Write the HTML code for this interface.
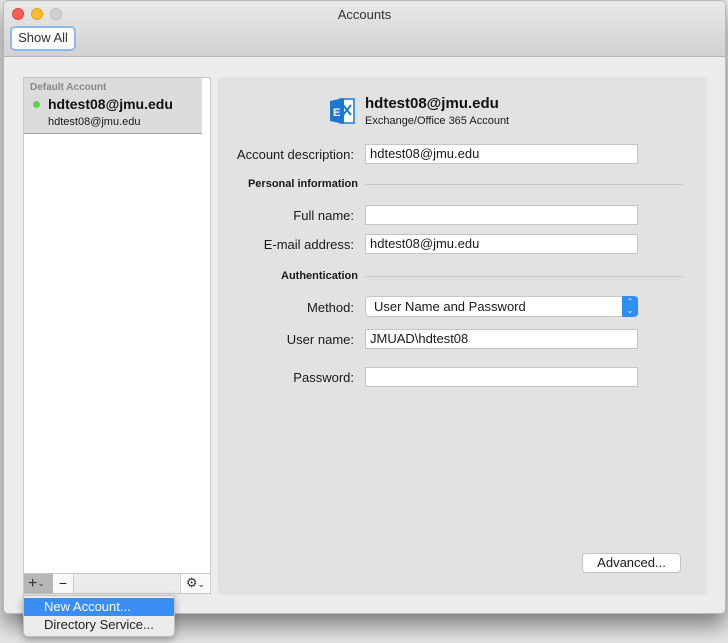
<!DOCTYPE html>
<html><head><meta charset="utf-8"><style>
*{box-sizing:border-box;margin:0;padding:0}
body{width:728px;height:643px;overflow:hidden;position:relative;font-family:"Liberation Sans",sans-serif;font-size:13px;color:#1a1a1a;background:#e6e6e6}
.win{position:absolute;left:3px;top:0;width:723px;height:614px;background:#ececec;border-radius:5px;overflow:hidden;border:1px solid #b8b8b8;box-shadow:0 12px 22px rgba(0,0,0,.45)}
.tb{position:absolute;left:0;top:0;right:0;height:56px;background:linear-gradient(#e9e9e9,#d2d2d2);border-bottom:1px solid #b4b4b4}
.dot{position:absolute;top:7px;width:12px;height:12px;border-radius:50%}
.title{position:absolute;top:6px;left:0;right:0;text-align:center;font-size:13px;color:#333}
.sa{position:absolute;left:6px;top:25px;width:66px;height:25px;border:2px solid #8fb8ec;border-radius:5px;background:#fbfbfb;font-size:13px;text-align:center;line-height:20px;color:#333}
.left{position:absolute;left:19px;top:76px;width:188px;height:517px;background:#fff;border:1px solid #c8c8c8}
.lhead{height:56px;background:#dcdcdc;border-bottom:1px solid #9e9e9e;position:relative;margin-right:8px}
.bar{position:absolute;left:0;bottom:0;width:186px;height:20px;background:#ececec;border-top:1px solid #c8c8c8}
.right{position:absolute;left:214px;top:76px;width:489px;height:518px;background:#e2e2e2;border-radius:4px}
.lbl{position:absolute;text-align:right;width:132px;left:4px;font-size:13px}
.inp{position:absolute;left:147px;width:273px;height:20px;background:#fff;border:1px solid #c5c5c5;font-size:13px;padding-left:4px;line-height:18px}
.sec{position:absolute;font-weight:bold;font-size:11px;text-align:right;width:134px;left:6px}
.hr{position:absolute;left:147px;width:318px;height:1px;background:#c8c8c8}
</style></head><body>
<div class="win">
 <div class="tb">
  <div class="dot" style="left:8px;background:#fc5f57;border:1px solid #e0443e"></div>
  <div class="dot" style="left:27px;background:#fdbc2e;border:1px solid #dfa023"></div>
  <div class="dot" style="left:46px;background:#cfcfcf;border:1px solid #bdbdbd"></div>
  <div class="title">Accounts</div>
  <div class="sa">Show All</div>
 </div>
 <div class="left">
  <div class="lhead">
   <div style="position:absolute;left:6px;top:4px;font-size:10px;font-weight:bold;color:#888">Default Account</div>
   <div style="position:absolute;left:9px;top:23px;width:7px;height:7px;border-radius:50%;background:#5ed14e"></div>
   <div style="position:absolute;left:24px;top:18px;font-size:14px;font-weight:bold;color:#111">hdtest08@jmu.edu</div>
   <div style="position:absolute;left:24px;top:38px;font-size:11px">hdtest08@jmu.edu</div>
  </div>
  <div class="bar">
   <div style="position:absolute;left:0;top:0;width:29px;height:19px;background:#b7b7b7;font-size:16px;line-height:18px;padding-left:4px;color:#333">+<span style="font-size:9px;vertical-align:2px">&#8964;</span></div>
   <div style="position:absolute;left:29px;top:0;width:21px;height:19px;background:#fafafa;border-right:1px solid #ccc;text-align:center;font-size:14px;line-height:18px">&minus;</div>
   <div style="position:absolute;right:0;top:0;width:30px;height:19px;background:#fafafa;border-left:1px solid #ccc;text-align:center;font-size:13px;line-height:18px;color:#333">&#9881;<span style="font-size:9px">&#8964;</span></div>
  </div>
 </div>
 <div class="right">
  <svg style="position:absolute;left:110px;top:19px" width="30" height="30" viewBox="0 0 30 30"><path d="M12 3h14v24H12z" fill="#fff" stroke="#1a78d0" stroke-width="1.5"/><path d="M15 9l8 10M23 9l-8 10" stroke="#1a78d0" stroke-width="2"/><path d="M2 5l14-3v26L2 25z" fill="#1a78d0"/><text x="5" y="20" font-size="11" font-weight="bold" fill="#fff" font-family="Liberation Sans">E</text></svg>
  <div style="position:absolute;left:147px;top:18px;font-size:15px;font-weight:bold;color:#111">hdtest08@jmu.edu</div>
  <div style="position:absolute;left:147px;top:38px;font-size:11px">Exchange/Office 365 Account</div>
  <div class="lbl" style="top:70px">Account description:</div><div class="inp" style="top:67px">hdtest08@jmu.edu</div>
  <div class="sec" style="top:101px">Personal information</div><div class="hr" style="top:107px"></div>
  <div class="lbl" style="top:131px">Full name:</div><div class="inp" style="top:128px"></div>
  <div class="lbl" style="top:160px">E-mail address:</div><div class="inp" style="top:157px">hdtest08@jmu.edu</div>
  <div class="sec" style="top:193px">Authentication</div><div class="hr" style="top:199px"></div>
  <div class="lbl" style="top:223px">Method:</div>
  <div class="inp" style="top:219px;height:21px;border-radius:4px;padding-left:8px;line-height:19px">User Name and Password<div style="position:absolute;right:-1px;top:-1px;width:16px;height:21px;background:#2d8ef6;border-radius:0 4px 4px 0;color:#fff;font-size:8px;line-height:9px;text-align:center;padding-top:1px">&#8963;<br>&#8964;</div></div>
  <div class="lbl" style="top:255px">User name:</div><div class="inp" style="top:252px">JMUAD\hdtest08</div>
  <div class="lbl" style="top:293px">Password:</div><div class="inp" style="top:290px"></div>
  <div style="position:absolute;left:364px;top:476px;width:99px;height:20px;background:#fff;border:1px solid #c4c4c4;border-radius:4px;text-align:center;line-height:18px;font-size:13px">Advanced...</div>
 </div>
</div>
<div style="position:absolute;left:23px;top:595px;width:152px;height:42px;background:#ececec;border:1px solid #c0c0c0;border-radius:0 0 5px 5px;box-shadow:0 3px 8px rgba(0,0,0,.3)">
 <div style="position:absolute;left:0;top:2px;width:150px;height:18px;background:#3b8df6;color:#fff;padding-left:20px;line-height:18px;font-size:13px">New Account...</div>
 <div style="position:absolute;left:20px;top:20px;line-height:18px;font-size:13px;color:#222">Directory Service...</div>
</div>
</body></html>
